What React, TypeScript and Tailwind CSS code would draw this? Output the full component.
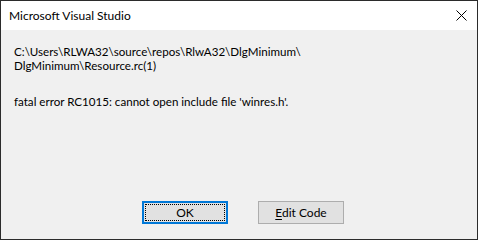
export default function App() {
  const font = { fontFamily: 'Lato, "Noto Sans", sans-serif' };
  return (
    <div
      className="w-[478px] h-[240px] border border-[#2b2b2b] flex flex-col bg-[#f0f0f0] text-[12px] text-black"
      style={font}
    >
      {/* title bar */}
      <div className="h-[29px] bg-white flex items-center justify-between pl-[8px] pr-[10px] shrink-0">
        <span className="leading-none">Microsoft Visual Studio</span>
        <svg width="11" height="11" viewBox="0 0 11 11">
          <path d="M0.5 0.5 L10.5 10.5 M10.5 0.5 L0.5 10.5" stroke="#000" strokeWidth="1" />
        </svg>
      </div>

      {/* body */}
      <div className="flex-1 flex flex-col">
        <div className="pl-[13px] pt-[15px] leading-[14px] text-[11.6px]">
          <p>C:\Users\RLWA32\source\repos\RlwA32\DlgMinimum\</p>
          <p>DlgMinimum\Resource.rc(1)</p>
          <p className="mt-[22px]">fatal error RC1015: cannot open include file 'winres.h'.</p>
        </div>

        <div className="mt-auto flex gap-[30px] pl-[141px] pb-[15px]">
          <button className="w-[86px] h-[23px] bg-[#e1e1e1] border-2 border-[#0078d7] p-[1px] flex">
            <span className="flex-1 border border-dotted border-black flex items-center justify-center leading-none">
              OK
            </span>
          </button>
          <button className="w-[86px] h-[23px] bg-[#e1e1e1] border border-[#adadad] flex items-center justify-center leading-none">
            <span>
              <span className="underline underline-offset-2">E</span>dit Code
            </span>
          </button>
        </div>
      </div>
    </div>
  );
}
